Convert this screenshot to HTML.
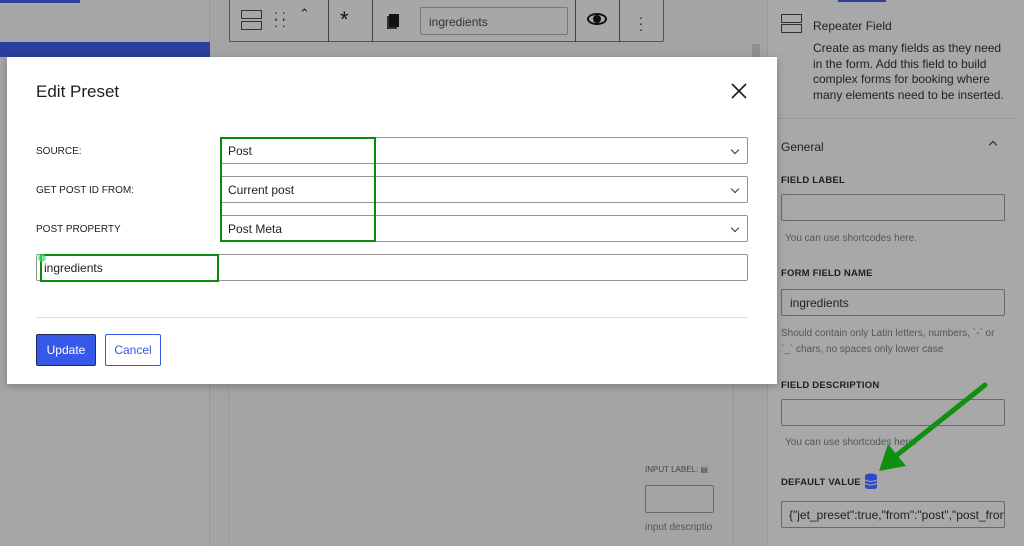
<!DOCTYPE html>
<html><head><meta charset="utf-8"><style>
*{box-sizing:border-box;margin:0;padding:0}
body{width:1024px;height:546px;overflow:hidden;background:#a4a4a4;font-family:"Liberation Sans",sans-serif;position:relative;color:#1e1e1e}
.a{position:absolute}
.lbl{font-size:10px;color:#1e1e1e;text-transform:uppercase}
.sel{position:absolute;left:220px;width:528px;height:27px;border:1px solid #949494;border-radius:2px;font-size:12px;padding:6px 0 0 7px;background:#fff}
.sel:after{content:"";position:absolute;right:9px;top:9px;width:5px;height:5px;border-right:1.3px solid #333;border-bottom:1.3px solid #333;transform:rotate(45deg)}
.rp{color:#222;font-size:12px}
.box{position:absolute;border:1px solid #6a6a6a;border-radius:2px}
.gl{font-size:9.5px;color:#1e1e1e;font-weight:bold;letter-spacing:.2px}
.hint{font-size:10px;color:#555}
</style></head><body>
<div class="a" style="left:0;top:0;width:210px;height:546px;background:#a6a6a6;border-right:1px solid #959595"></div>
<div class="a" style="left:0;top:0;width:80px;height:3px;background:#2b3fa0"></div>
<div class="a" style="left:0;top:42px;width:210px;height:15px;background:#2d3f9e"></div>
<div class="a" style="left:228px;top:60px;width:506px;height:486px;border-left:1px solid #989898;border-right:1px solid #989898"></div>
<div class="a" style="left:752px;top:44px;width:8px;height:18px;background:#8f8f8f"></div>
<div class="a" style="left:229px;top:-2px;width:435px;height:44px;border:1px solid #555;border-radius:2px;background:#a7a7a7"></div>
<div class="a" style="left:328px;top:0;width:1px;height:42px;background:#444"></div>
<div class="a" style="left:372px;top:0;width:1px;height:42px;background:#444"></div>
<div class="a" style="left:575px;top:0;width:1px;height:42px;background:#444"></div>
<div class="a" style="left:619px;top:0;width:1px;height:42px;background:#444"></div>
<div class="a" style="left:241px;top:10px;width:21px;height:9px;border:1px solid #333"></div>
<div class="a" style="left:241px;top:21px;width:21px;height:9px;border:1px solid #333"></div>
<div class="a" style="left:274px;top:12px;font-size:14px;line-height:7px;color:#222">: :<br>: :</div>
<div class="a" style="left:299px;top:6px;font-size:13px;color:#222">&#8963;</div>
<div class="a" style="left:340px;top:7px;font-size:22px;color:#111">*</div>
<div class="a" style="left:389px;top:14px;width:10px;height:13px;background:#111;box-shadow:-2px 2px 0 #333"></div>
<div class="a" style="left:420px;top:7px;width:148px;height:28px;border:1px solid #777;border-radius:2px;font-size:12px;padding:7px 0 0 8px;color:#333">ingredients</div>
<div class="a" style="left:587px;top:13px;width:20px;height:12px;border-radius:50%;border:2px solid #111"></div>
<div class="a" style="left:593px;top:15px;width:8px;height:8px;border-radius:50%;background:#111"></div>
<div class="a" style="left:639px;top:11px;font-size:14px;line-height:6px;color:#222">.<br>.<br>.</div>
<div class="a" style="left:767px;top:0;width:257px;height:546px;background:#a8a8a8;border-left:1px solid #999"></div>
<div class="a" style="left:838px;top:0;width:48px;height:2px;background:#2d3f9e"></div>
<div class="a" style="left:781px;top:14px;width:21px;height:9px;border:1px solid #333"></div>
<div class="a" style="left:781px;top:24px;width:21px;height:9px;border:1px solid #333"></div>
<div class="a rp" style="left:813px;top:19px">Repeater Field</div>
<div class="a rp" style="left:813px;top:41px;line-height:15.7px;width:195px">Create as many fields as they need in the form. Add this field to build complex forms for booking where many elements need to be inserted.</div>
<div class="a" style="left:777px;top:118px;width:237px;height:1px;background:#999"></div>
<div class="a rp" style="left:781px;top:140px">General</div>
<div class="a" style="left:990px;top:142px;width:6px;height:6px;border-left:1.5px solid #222;border-top:1.5px solid #222;transform:rotate(45deg)"></div>
<div class="a gl" style="left:781px;top:175px">FIELD LABEL</div>
<div class="box" style="left:781px;top:194px;width:224px;height:27px"></div>
<div class="a hint" style="left:785px;top:233px">You can use shortcodes here.</div>
<div class="a gl" style="left:781px;top:268px">FORM FIELD NAME</div>
<div class="box" style="left:781px;top:289px;width:224px;height:27px;font-size:12px;padding:6px 0 0 8px;color:#222">ingredients</div>
<div class="a hint" style="left:781px;top:326px;line-height:16px;width:218px">Should contain only Latin letters, numbers, `-` or `_` chars, no spaces only lower case</div>
<div class="a gl" style="left:781px;top:380px">FIELD DESCRIPTION</div>
<div class="box" style="left:781px;top:399px;width:224px;height:27px"></div>
<div class="a hint" style="left:785px;top:437px">You can use shortcodes here.</div>
<div class="a gl" style="left:781px;top:477px">DEFAULT VALUE</div>
<svg class="a" style="left:864px;top:473px" width="14" height="16"><ellipse cx="7" cy="3" rx="6" ry="2.5" fill="#2f47c8"/><rect x="1" y="3" width="12" height="11" fill="#2f47c8"/><ellipse cx="7" cy="14" rx="6" ry="2.5" fill="#2f47c8"/><path d="M1 7q6 3 12 0M1 10.5q6 3 12 0" stroke="#a8a8a8" fill="none"/></svg>
<div class="box" style="left:781px;top:501px;width:224px;height:27px;font-size:12px;padding:6px 0 0 7px;overflow:hidden;white-space:nowrap;color:#222">{"jet_preset":true,"from":"post","post_from</div>
<div class="a" style="left:645px;top:465px;font-size:8px;color:#444">INPUT LABEL: &#9636;</div>
<div class="box" style="left:645px;top:485px;width:69px;height:28px"></div>
<div class="a" style="left:645px;top:522px;font-size:10px;color:#555">input descriptio</div>
<svg class="a" style="left:0;top:0" width="1024" height="546"><line x1="985" y1="385" x2="897" y2="455" stroke="#109010" stroke-width="5" stroke-linecap="round"/><polygon points="879,471 888,444 906,466" fill="#109010"/></svg>
<div class="a" style="left:7px;top:57px;width:770px;height:327px;background:#fff;box-shadow:0 2px 8px rgba(0,0,0,.25)"></div>
<div class="a" style="left:36px;top:82px;font-size:17px;color:#1e1e1e">Edit Preset</div>
<svg class="a" style="left:731px;top:83px" width="16" height="16"><path d="M1 1L15 15M15 1L1 15" stroke="#1e1e1e" stroke-width="1.6"/></svg>
<div class="a lbl" style="left:36px;top:146px">SOURCE:</div>
<div class="a lbl" style="left:36px;top:185px">GET POST ID FROM:</div>
<div class="a lbl" style="left:36px;top:224px">POST PROPERTY</div>
<div class="sel" style="top:137px">Post</div>
<div class="sel" style="top:176px">Current post</div>
<div class="sel" style="top:215px">Post Meta</div>
<div class="a" style="left:36px;top:254px;width:712px;height:27px;border:1px solid #949494;border-radius:2px;font-size:12px;padding:6px 0 0 7px">ingredients</div>
<div class="a" style="left:220px;top:137px;width:156px;height:105px;border:2px solid #0a8a0a"></div>
<div class="a" style="left:40px;top:254px;width:179px;height:28px;border:2px solid #0a8a0a"></div>
<div class="a" style="left:38px;top:254px;width:8px;height:8px;border-radius:50%;background:#3ae07a;opacity:.7"></div>
<div class="a" style="left:36px;top:317px;width:712px;height:1px;background:#ddd"></div>
<div class="a" style="left:36px;top:334px;width:60px;height:32px;background:#3858e9;border:1px solid #1e2a60;border-radius:2px;color:#fff;font-size:12px;text-align:center;line-height:30px">Update</div>
<div class="a" style="left:105px;top:334px;width:56px;height:32px;background:#fff;border:1px solid #3858e9;border-radius:2px;color:#3858e9;font-size:12px;text-align:center;line-height:30px">Cancel</div>
</body></html>
